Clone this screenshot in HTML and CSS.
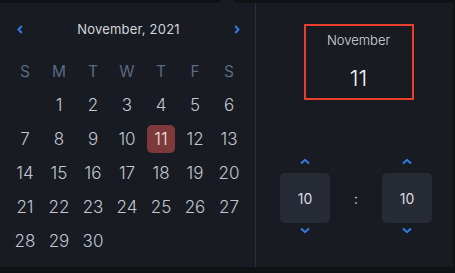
FILE: index.html
```html
<!DOCTYPE html>
<html>
<head>
<meta charset="utf-8">
<link rel="stylesheet" href="styles.css">
</head>
<body>
<div class="page">
  <div class="panel">
    <div class="calendar">
      <div class="cal-header">
        <button class="nav"><svg width="6" height="9" viewBox="0 0 6 9"><path d="M4.8 1 L1.5 4.5 L4.8 8" fill="none" stroke="#2f7de1" stroke-width="2"/></svg></button>
        <div class="title">November, 2021</div>
        <button class="nav"><svg width="6" height="9" viewBox="0 0 6 9"><path d="M1.2 1 L4.5 4.5 L1.2 8" fill="none" stroke="#2f7de1" stroke-width="2"/></svg></button>
      </div>
      <div class="grid">
        <div class="wd">S</div><div class="wd">M</div><div class="wd">T</div><div class="wd">W</div><div class="wd">T</div><div class="wd">F</div><div class="wd">S</div>
        <div class="day"></div><div class="day">1</div><div class="day">2</div><div class="day">3</div><div class="day">4</div><div class="day">5</div><div class="day">6</div>
        <div class="day">7</div><div class="day">8</div><div class="day">9</div><div class="day">10</div><div class="day"><span class="sel">11</span></div><div class="day">12</div><div class="day">13</div>
        <div class="day">14</div><div class="day">15</div><div class="day">16</div><div class="day">17</div><div class="day">18</div><div class="day">19</div><div class="day">20</div>
        <div class="day">21</div><div class="day">22</div><div class="day">23</div><div class="day">24</div><div class="day">25</div><div class="day">26</div><div class="day">27</div>
        <div class="day">28</div><div class="day">29</div><div class="day">30</div>
      </div>
    </div>
    <div class="side">
      <div class="datebox">
        <div class="month">November</div>
        <div class="dnum">11</div>
      </div>
      <div class="time">
        <div class="spin">
          <button class="arrow"><svg width="10" height="7" viewBox="0 0 10 7"><path d="M1 5.5 L5 1.8 L9 5.5" fill="none" stroke="#2f7de1" stroke-width="2"/></svg></button>
          <div class="tbox">10</div>
          <button class="arrow"><svg width="10" height="7" viewBox="0 0 10 7"><path d="M1 1.5 L5 5.2 L9 1.5" fill="none" stroke="#2f7de1" stroke-width="2"/></svg></button>
        </div>
        <div class="colon">:</div>
        <div class="spin">
          <button class="arrow"><svg width="10" height="7" viewBox="0 0 10 7"><path d="M1 5.5 L5 1.8 L9 5.5" fill="none" stroke="#2f7de1" stroke-width="2"/></svg></button>
          <div class="tbox">10</div>
          <button class="arrow"><svg width="10" height="7" viewBox="0 0 10 7"><path d="M1 1.5 L5 5.2 L9 1.5" fill="none" stroke="#2f7de1" stroke-width="2"/></svg></button>
        </div>
      </div>
    </div>
  </div>
</div>
</body>
</html>
```
FILE: styles.css
```css
html, body {
  margin: 0;
  padding: 0;
  background: #0f1115;
  font-family: Inter, "Noto Sans", sans-serif;
}
.page {
  width: 455px;
  height: 273px;
  padding-top: 3px;
  box-sizing: border-box;
}
.panel {
  position: relative;
  width: 453px;
  height: 264px;
  background: #181b22;
  display: flex;
}
.panel::before {
  content: "";
  position: absolute;
  top: -3px;
  left: 219px;
  width: 17px;
  height: 3px;
  background: #181b22;
  clip-path: polygon(2px 0, 15px 0, 17px 100%, 0 100%);
}
.calendar {
  border-right: 1px solid #2b303a;
  box-sizing: border-box;
  width: 256px;
  padding-top: 9px;
}
.cal-header {
  height: 34px;
  display: flex;
  align-items: center;
  justify-content: space-between;
  padding: 0 15px 0 17px;
}
.nav, .arrow {
  background: none;
  border: 0;
  padding: 0;
  margin: 0;
  display: flex;
  align-items: center;
  justify-content: center;
}
.nav { width: 6px; height: 12px; }
.title {
  color: #d3d6dc;
  font-size: 13px;
  letter-spacing: 0.2px;
}
.grid {
  margin-top: 8px;
  display: grid;
  grid-template-columns: repeat(7, 34px);
  grid-auto-rows: 34px;
  justify-content: center;
  padding-right: 1px;
}
.wd {
  display: flex;
  align-items: center;
  justify-content: center;
  color: #5b6a80;
  font-size: 15.5px;
}
.day {
  display: flex;
  align-items: center;
  justify-content: center;
  color: #c2c7d0;
  font-size: 17px;
  font-weight: 350;
}
.sel {
  width: 28px;
  height: 28px;
  border-radius: 5px;
  background: #7e3a3a;
  color: #f1e6e6;
  display: flex;
  align-items: center;
  justify-content: center;
}
.side {
  flex: 1;
  display: flex;
  flex-direction: column;
  align-items: center;
  padding-top: 21px;
  padding-left: 3px;
}
.datebox {
  width: 110px;
  height: 76px;
  box-sizing: border-box;
  border: 2px solid #e8402b;
  margin-left: 5px;
  display: flex;
  flex-direction: column;
  align-items: center;
}
.month {
  margin-top: 4px;
  color: #d6d9de;
  font-size: 13px;
  line-height: 20px;
  font-weight: 350;
}
.dnum {
  margin-top: 15px;
  color: #f4f5f7;
  font-size: 22px;
  line-height: 26px;
  font-weight: 300;
}
.time {
  margin-top: 53px;
  display: flex;
  align-items: flex-start;
}
.spin {
  width: 50px;
  display: flex;
  flex-direction: column;
  align-items: center;
}
.arrow { width: 50px; height: 16px; }
.spin .arrow:last-child { height: 14px; }
.tbox {
  margin-top: 4px;
  width: 50px;
  height: 50px;
  border-radius: 5px;
  background: #262b35;
  color: #d9dce1;
  font-size: 14px;
  display: flex;
  align-items: center;
  justify-content: center;
}
.colon {
  width: 52px;
  height: 50px;
  margin-top: 20px;
  display: flex;
  align-items: center;
  justify-content: center;
  color: #cdd1d7;
  font-size: 14px;
}
```
